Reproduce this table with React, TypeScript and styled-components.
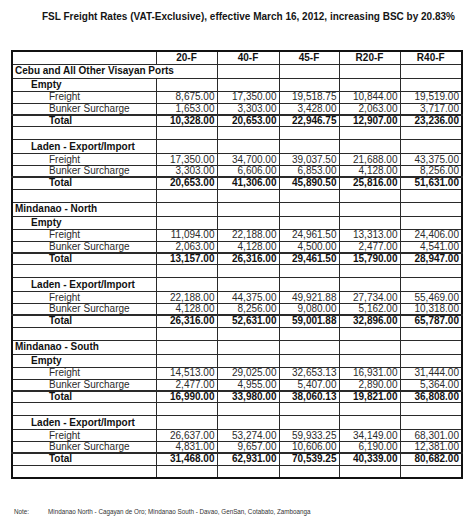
import React from "react";
import styled, { createGlobalStyle } from "styled-components";

const GlobalStyle = createGlobalStyle`
  html, body {
    margin: 0;
    padding: 0;
    background: #fff;
  }
  body {
    font-family: "Liberation Sans", Arial, sans-serif;
    color: #1c1c1c;
  }
`;

type Row = { label: string; values: string[] };
type Load = { name: string; rows: Row[] };
type Region = { name: string; span?: boolean; loads: Load[] };

const regions: Region[] = [
  {
    name: "Cebu and All Other Visayan Ports",
    span: true,
    loads: [
      {
        name: "Empty",
        rows: [
          { label: "Freight", values: ["8,675.00", "17,350.00", "19,518.75", "10,844.00", "19,519.00"] },
          { label: "Bunker Surcharge", values: ["1,653.00", "3,303.00", "3,428.00", "2,063.00", "3,717.00"] },
          { label: "Total", values: ["10,328.00", "20,653.00", "22,946.75", "12,907.00", "23,236.00"] },
        ],
      },
      {
        name: "Laden - Export/Import",
        rows: [
          { label: "Freight", values: ["17,350.00", "34,700.00", "39,037.50", "21,688.00", "43,375.00"] },
          { label: "Bunker Surcharge", values: ["3,303.00", "6,606.00", "6,853.00", "4,128.00", "8,256.00"] },
          { label: "Total", values: ["20,653.00", "41,306.00", "45,890.50", "25,816.00", "51,631.00"] },
        ],
      },
    ],
  },
  {
    name: "Mindanao - North",
    loads: [
      {
        name: "Empty",
        rows: [
          { label: "Freight", values: ["11,094.00", "22,188.00", "24,961.50", "13,313.00", "24,406.00"] },
          { label: "Bunker Surcharge", values: ["2,063.00", "4,128.00", "4,500.00", "2,477.00", "4,541.00"] },
          { label: "Total", values: ["13,157.00", "26,316.00", "29,461.50", "15,790.00", "28,947.00"] },
        ],
      },
      {
        name: "Laden - Export/Import",
        rows: [
          { label: "Freight", values: ["22,188.00", "44,375.00", "49,921.88", "27,734.00", "55,469.00"] },
          { label: "Bunker Surcharge", values: ["4,128.00", "8,256.00", "9,080.00", "5,162.00", "10,318.00"] },
          { label: "Total", values: ["26,316.00", "52,631.00", "59,001.88", "32,896.00", "65,787.00"] },
        ],
      },
    ],
  },
  {
    name: "Mindanao - South",
    loads: [
      {
        name: "Empty",
        rows: [
          { label: "Freight", values: ["14,513.00", "29,025.00", "32,653.13", "16,931.00", "31,444.00"] },
          { label: "Bunker Surcharge", values: ["2,477.00", "4,955.00", "5,407.00", "2,890.00", "5,364.00"] },
          { label: "Total", values: ["16,990.00", "33,980.00", "38,060.13", "19,821.00", "36,808.00"] },
        ],
      },
      {
        name: "Laden - Export/Import",
        rows: [
          { label: "Freight", values: ["26,637.00", "53,274.00", "59,933.25", "34,149.00", "68,301.00"] },
          { label: "Bunker Surcharge", values: ["4,831.00", "9,657.00", "10,606.00", "6,190.00", "12,381.00"] },
          { label: "Total", values: ["31,468.00", "62,931.00", "70,539.25", "40,339.00", "80,682.00"] },
        ],
      },
    ],
  },
];

const columns = ["20-F", "40-F", "45-F", "R20-F", "R40-F"];
const colWidths = [144, 61, 62, 60, 61, 62];

const Page = styled.div`
  width: 474px;
  height: 527px;
  box-sizing: border-box;
  padding: 10px 0 0 11px;
  display: flex;
  flex-direction: column;
`;

const Title = styled.h1`
  margin: 0 0 0 31px;
  font-size: 10px;
  line-height: 13px;
  font-weight: bold;
  color: #151515;
  white-space: nowrap;
`;

const Sheet = styled.table`
  margin-top: 27px;
  width: 451px;
  table-layout: fixed;
  border-collapse: collapse;
  border: 2px solid #111;
  font-size: 10px;
`;

const Tr = styled.tr<{ h: number }>`
  height: ${({ h }) => h}px;
`;

const Cell = styled.td<{ indent?: number; bold?: boolean; num?: boolean; topRule?: boolean }>`
  border: 1px solid #2a2a2a;
  border-top-width: ${({ topRule }) => (topRule ? 2 : 1)}px;
  padding: 0 ${({ num }) => (num ? 2 : 0)}px 0 ${({ indent }) => indent ?? 0}px;
  text-align: ${({ num }) => (num ? "right" : "left")};
  font-weight: ${({ bold }) => (bold ? "bold" : "normal")};
  color: ${({ bold }) => (bold ? "#111" : "#2b2b2b")};
  line-height: 10px;
  white-space: nowrap;
  overflow: visible;
  vertical-align: middle;
`;

const HeadCell = styled.th`
  border: 1px solid #2a2a2a;
  padding: 0;
  text-align: center;
  font-weight: bold;
  color: #111;
  line-height: 10px;
  vertical-align: middle;
`;

const Note = styled.div`
  display: flex;
  margin-top: 29px;
  padding-left: 3px;
  font-size: 6.3px;
  color: #333;
`;

const NoteLabel = styled.span`
  width: 34px;
`;

function Blank({ h }: { h: number }) {
  return (
    <Tr h={h}>
      {colWidths.map((_, i) => (
        <Cell key={i} />
      ))}
    </Tr>
  );
}

function LoadRows({ load, headH }: { load: Load; headH: number }) {
  const heights = [12, 11, 12];
  return (
    <>
      <Tr h={headH}>
        <Cell indent={18} bold>
          {load.name}
        </Cell>
        {columns.map((c) => (
          <Cell key={c} />
        ))}
      </Tr>
      {load.rows.map((r, i) => {
        const total = r.label === "Total";
        return (
          <Tr h={heights[i]} key={r.label}>
            <Cell indent={36} bold={total} topRule={total}>
              {r.label}
            </Cell>
            {r.values.map((v, j) => (
              <Cell key={j} num bold={total} topRule={total}>
                {v}
              </Cell>
            ))}
          </Tr>
        );
      })}
    </>
  );
}

export default function App() {
  return (
    <>
      <GlobalStyle />
      <Page>
        <Title>FSL Freight Rates (VAT-Exclusive), effective March 16, 2012, increasing BSC by 20.83%</Title>
        <Sheet>
          <colgroup>
            {colWidths.map((w, i) => (
              <col key={i} style={{ width: w }} />
            ))}
          </colgroup>
          <thead>
            <Tr h={13}>
              <HeadCell />
              {columns.map((c) => (
                <HeadCell key={c}>{c}</HeadCell>
              ))}
            </Tr>
          </thead>
          <tbody>
            {regions.map((reg) => (
              <React.Fragment key={reg.name}>
                <Tr h={14}>
                  <Cell indent={2} bold colSpan={reg.span ? 2 : 1}>
                    {reg.name}
                  </Cell>
                  {columns.slice(reg.span ? 1 : 0).map((c) => (
                    <Cell key={c} />
                  ))}
                </Tr>
                <LoadRows load={reg.loads[0]} headH={13} />
                <Blank h={13} />
                <LoadRows load={reg.loads[1]} headH={14} />
                <Blank h={13} />
              </React.Fragment>
            ))}
          </tbody>
        </Sheet>
        <Note>
          <NoteLabel>Note:</NoteLabel>
          <span>Mindanao North - Cagayan de Oro; Mindanao South - Davao, GenSan, Cotabato, Zamboanga</span>
        </Note>
      </Page>
    </>
  );
}
